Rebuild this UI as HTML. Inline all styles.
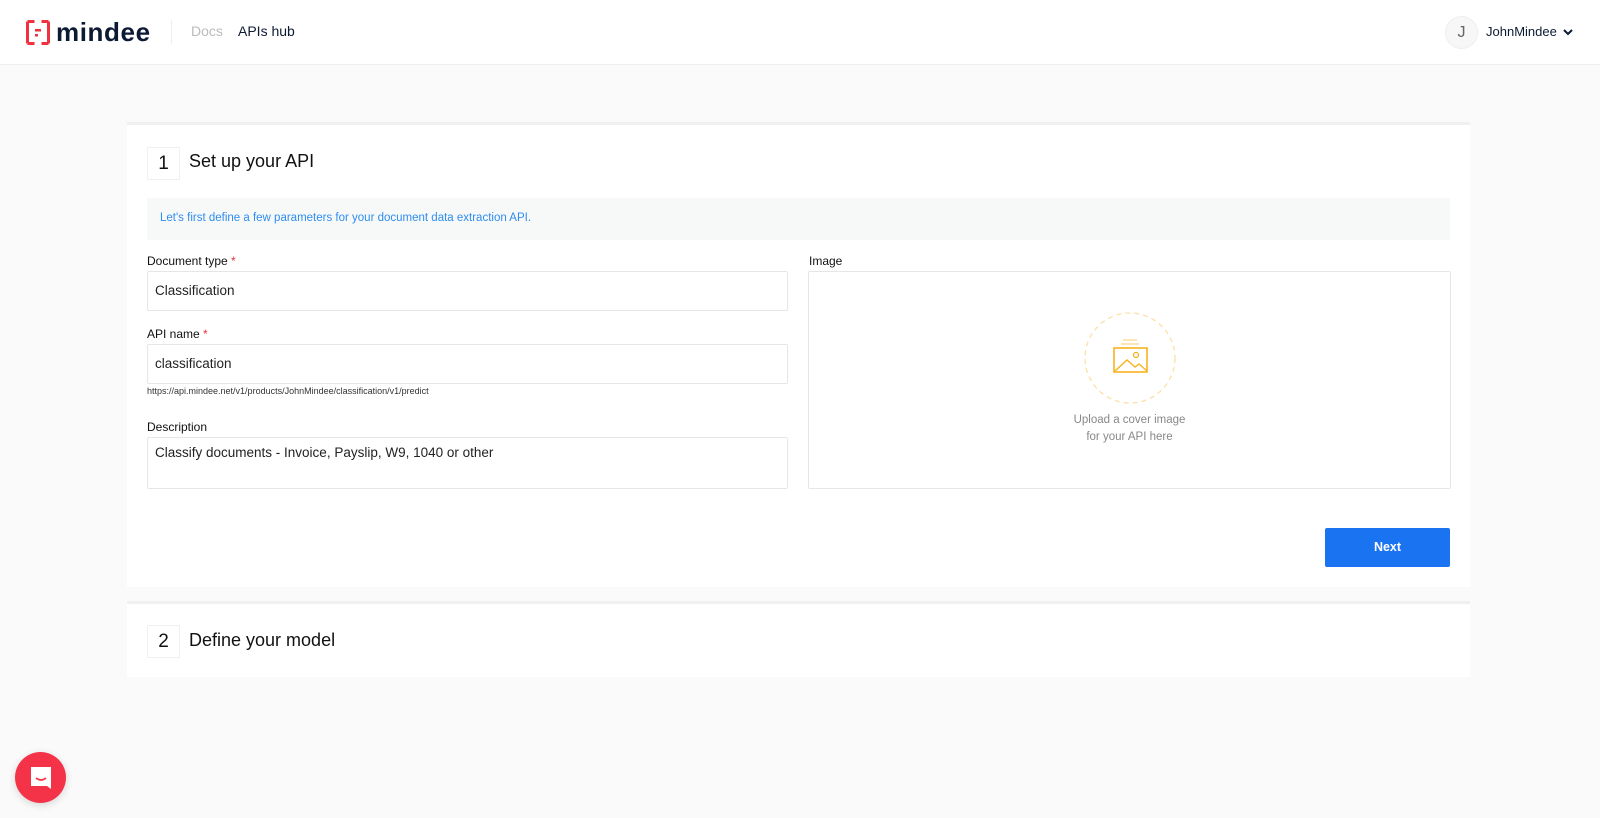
<!DOCTYPE html>
<html><head><style>
*{box-sizing:border-box;margin:0;padding:0}
body{width:1600px;height:818px;background:#fafafa;font-family:"Liberation Sans",sans-serif;position:relative;overflow:hidden;color:#111}
.hdr{position:absolute;left:0;top:0;width:1600px;height:65px;background:#fff;border-bottom:1px solid #eee}
.abs{position:absolute}
.card{position:absolute;left:127px;width:1343px;background:#fff;border-top:3px solid #f0f0f0}
.num{position:absolute;width:33px;height:33px;border:1px solid #f0f0f0;font-size:19px;text-align:center;line-height:31px}
.ttl{position:absolute;font-size:18px}
.lbl{position:absolute;font-size:12px;color:#111}
.lbl b{color:#e5333e;font-weight:normal}
.inp{position:absolute;border:1px solid #e6e6e6;border-radius:2px;font-size:13.5px;padding-left:7px;color:#222}
</style></head><body>
<div class="hdr">
 <svg class="abs" style="left:26px;top:20px" width="24" height="25" viewBox="0 0 24 25"><path d="M1.5 1.5h7M1.5 1.5v22M1.5 23.5h7M22.5 1.5h-7M22.5 1.5v22M22.5 23.5h-7" stroke="#f0313f" stroke-width="3" fill="none"/><rect x="9" y="9" width="6" height="2.5" fill="#f0313f"/><rect x="9" y="14" width="3" height="2.5" fill="#f0313f"/></svg>
 <div class="abs" style="left:56px;top:17px;font-size:26px;font-weight:bold;color:#0c1a33;letter-spacing:0.6px">mindee</div>
 <div class="abs" style="left:171px;top:20px;width:1px;height:24px;background:#eee"></div>
 <div class="abs" style="left:191px;top:23px;font-size:14px;color:#bbb">Docs</div>
 <div class="abs" style="left:238px;top:23px;font-size:14px;color:#0c1a33">APIs hub</div>
 <div class="abs" style="left:1445px;top:16px;width:33px;height:33px;border-radius:50%;background:#f7f7f7;border:1px solid #eee;text-align:center;line-height:31px;color:#666;font-size:16px">J</div>
 <div class="abs" style="left:1486px;top:24px;font-size:13px;color:#0c1a33">JohnMindee</div>
 <svg class="abs" style="left:1563px;top:29px" width="10" height="7"><path d="M1 1l4 4 4-4" stroke="#0c1a33" stroke-width="2" fill="none"/></svg>
</div>

<div class="card" style="top:122px;height:465px">
 <div class="num" style="left:20px;top:22px">1</div>
 <div class="ttl" style="left:62px;top:26px">Set up your API</div>
 <div class="abs" style="left:20px;top:73px;width:1303px;height:42px;background:#f7f9f9;color:#2f8cf0;font-size:11.5px;padding:14px 13px">Let's first define a few parameters for your document data extraction API.</div>
 <div class="lbl" style="left:20px;top:129px">Document type <b>*</b></div>
 <div class="inp" style="left:20px;top:146px;width:641px;height:40px;line-height:38px">Classification</div>
 <div class="lbl" style="left:20px;top:202px">API name <b>*</b></div>
 <div class="inp" style="left:20px;top:219px;width:641px;height:40px;line-height:38px">classification</div>
 <div class="abs" style="left:20px;top:261px;font-size:9px;color:#333">https://api.mindee.net/v1/products/JohnMindee/classification/v1/predict</div>
 <div class="lbl" style="left:20px;top:295px">Description</div>
 <div class="inp" style="left:20px;top:312px;width:641px;height:52px;padding-top:7px">Classify documents - Invoice, Payslip, W9, 1040 or other</div>
 <div class="lbl" style="left:682px;top:129px">Image</div>
 <div class="abs" style="left:681px;top:146px;width:643px;height:218px;border:1px solid #e6e6e6;border-radius:2px">
  <svg class="abs" style="left:274px;top:39px" width="94" height="94"><circle cx="47" cy="47" r="45" stroke="#fde0a8" stroke-width="1.3" stroke-dasharray="5 4" fill="none"/><path d="M40 29h14M38 33h18" stroke="#fcd68a" stroke-width="1.3"/><rect x="31" y="37" width="33" height="24" stroke="#f7b31e" stroke-width="1.6" fill="none"/><circle cx="53" cy="44" r="2.5" stroke="#f7b31e" stroke-width="1.3" fill="none"/><path d="M32 60l12-11 8 7 4-3 8 7" stroke="#f7b31e" stroke-width="1.4" fill="none"/></svg>
  <div class="abs" style="left:0;width:641px;top:140px;text-align:center;font-size:11.5px;color:#888;line-height:17px">Upload a cover image<br>for your API here</div>
 </div>
 <div class="abs" style="left:1198px;top:403px;width:125px;height:39px;background:#1a73f0;border-radius:2px;color:#fff;font-size:12.5px;font-weight:bold;text-align:center;line-height:39px">Next</div>
</div>

<div class="card" style="top:601px;height:76px">
 <div class="num" style="left:20px;top:21px">2</div>
 <div class="ttl" style="left:62px;top:26px">Define your model</div>
</div>

<div class="abs" style="left:15px;top:752px;width:51px;height:51px;border-radius:50%;background:#f53348;box-shadow:0 2px 8px rgba(0,0,0,.15)">
 <svg class="abs" style="left:13px;top:13px" width="26" height="26"><path d="M3 2h20v22l-4-3H3z" fill="#fff"/><path d="M8 13q5 4 10 0" stroke="#f53348" stroke-width="1.6" fill="none"/></svg>
</div>
</body></html>
